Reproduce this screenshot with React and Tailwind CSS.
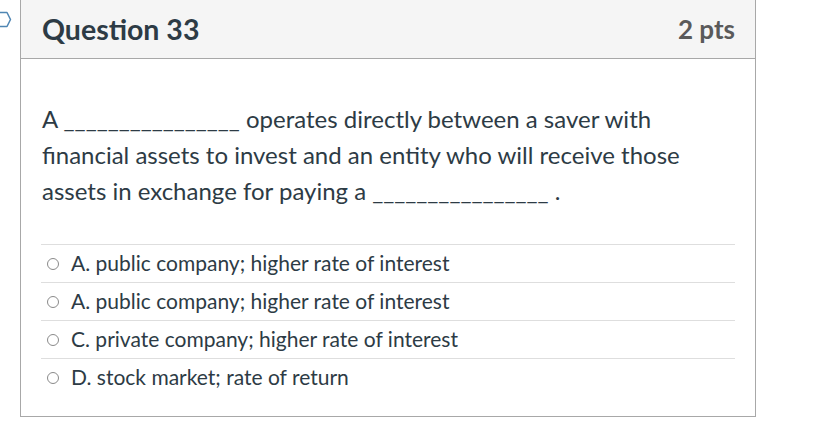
import { useState } from 'react';

const opciones = [
    'A. public company; higher rate of interest',
    'A. public company; higher rate of interest',
    'C. private company; higher rate of interest',
    'D. stock market; rate of return',
];

const blank = '________________';

const App = () => {
    const [seleccion, setSeleccion] = useState(null);

    return (
        <div className="relative min-h-[429px] bg-white font-['Lato','Liberation_Sans',sans-serif] text-[#2d3b45]">
            {/* icono de marcar pregunta, recortado en el borde */}
            <svg className="absolute left-0 top-[11px]" width="12" height="17" viewBox="0 0 12 17" fill="none">
                <path d="M-2 1.5 H7 L10.5 8.5 L7 15.5 H-2" stroke="#4f86b3" strokeWidth="1.5" strokeLinejoin="round" />
            </svg>

            <div className="ml-[20px] w-[736px] border-x border-b border-[#a8a8a8]">
                <div className="flex h-[59px] items-center justify-between border-b border-[#a8a8a8] bg-[#f5f5f5] pl-[21px] pr-[20px]">
                    <h2 className="text-[28.5px] font-bold leading-none">Question 33</h2>
                    <span className="text-[26px] font-bold leading-none text-[#5a5a5a]">2 pts</span>
                </div>

                <div className="px-[20px] pb-[20px] pt-[42px]">
                    <p className="w-[660px] pl-px text-[24px] leading-[36px]">
                        A {blank} operates directly between a saver with financial assets to invest and an entity who will receive those assets in exchange for paying a {blank} .
                    </p>

                    <ul className="mt-[35px]">
                        {opciones.map((texto, i) => (
                            <li key={i} className="border-t border-[#dedede]">
                                <label className="flex h-[37px] cursor-pointer items-center gap-[12px] pb-[2px] pl-[6px] text-[21px]">
                                    <input
                                        type="radio"
                                        name="q33"
                                        checked={seleccion === i}
                                        onChange={() => setSeleccion(i)}
                                        className="mt-[2px] h-[12px] w-[12px] shrink-0 appearance-none rounded-full border border-[#8a8a8a] bg-white checked:border-[4px] checked:border-[#2d3b45]"
                                    />
                                    <span>{texto}</span>
                                </label>
                            </li>
                        ))}
                    </ul>
                </div>
            </div>
        </div>
    );
};

export default App;
